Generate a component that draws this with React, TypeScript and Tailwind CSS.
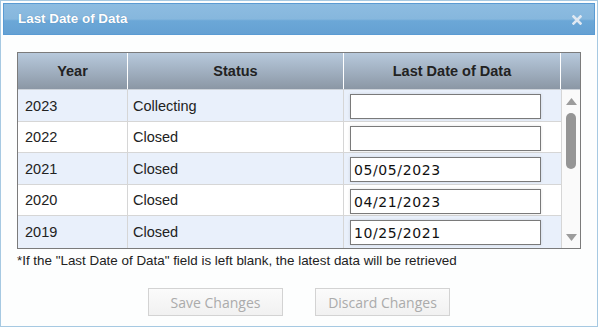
import React from "react";

const rows = [
  { year: "2023", status: "Collecting", date: "", h: "h-[32px]" },
  { year: "2022", status: "Closed", date: "", h: "h-[31px]" },
  { year: "2021", status: "Closed", date: "05/05/2023", h: "h-[32px]" },
  { year: "2020", status: "Closed", date: "04/21/2023", h: "h-[31px]" },
  { year: "2019", status: "Closed", date: "10/25/2021", h: "h-[32px]" },
];

export default function App() {
  return (
    <div className="w-[598px] h-[327px] border border-[#a6c9e2] bg-[#fdfefe] p-[2px] font-['Liberation_Sans',Arial,sans-serif] text-[#222]">
      {/* Title bar */}
      <div className="h-[32px] flex items-center justify-between border border-[#5a9bd3] bg-[linear-gradient(to_bottom,#8dbce1_0%,#86b7dd_50%,#6ba7d7_56%,#65a1d3_100%)] pl-[14px] pr-[12px]">
        <span className="text-[13.4px] font-bold text-white [text-shadow:0_0_1px_rgba(40,90,140,0.5)]">Last Date of Data</span>
        <svg width="10" height="10" viewBox="0 0 10 10" className="mt-[1px]">
          <path d="M1.5 1.5 L8.5 8.5 M8.5 1.5 L1.5 8.5" stroke="#dfe8f2" strokeWidth="2.6" strokeLinecap="square" />
        </svg>
      </div>

      {/* Table */}
      <div className="ml-[14px] mt-[17px] w-[564px] border border-[#7b7b7b]">
        <div className="grid grid-cols-[110px_216px_217px_19px] h-[37px] bg-[linear-gradient(to_bottom,#b7c9dc,#8b97a5)] border-b border-[#cdd3da] text-[14.5px] font-bold text-[#222]">
          <div className="flex items-center justify-center pt-[1px] border-r border-white">Year</div>
          <div className="flex items-center justify-center pt-[1px] border-r border-white">Status</div>
          <div className="flex items-center justify-center pt-[1px] border-r border-white">Last Date of Data</div>
          <div />
        </div>
        <div className="flex">
          <div className="w-[543px]">
            {rows.map((r, i) => (
              <div
                key={r.year}
                className={`grid grid-cols-[110px_216px_217px] ${r.h} text-[14.5px] ${i % 2 === 0 ? "bg-[#e9f0fb]" : "bg-white"} ${i < rows.length - 1 ? "border-b border-[#d6d6d6]" : ""}`}
              >
                <div className="flex items-center pl-[7px] pt-[2px] border-r border-[#d6d6d6]">{r.year}</div>
                <div className="flex items-center pl-[5px] pt-[2px] border-r border-[#d6d6d6]">{r.status}</div>
                <div className="pl-[6px] pt-[4px]">
                  <input
                    readOnly
                    value={r.date}
                    className="w-[191px] h-[25px] border border-[#7a7a7a] bg-white px-[3px] text-[14px] tracking-[0.6px] text-[#111] font-['DejaVu_Sans',Verdana,sans-serif] outline-none shadow-[0_0_3px_rgba(0,0,0,0.12)]"
                  />
                </div>
              </div>
            ))}
          </div>
          <div className="w-[19px] border-l border-[#d6d6d6] bg-[#fafafa] flex flex-col items-center pt-[8px] pb-[7px]">
            <svg width="11" height="7" viewBox="0 0 11 7">
              <path d="M5.5 0 L11 7 L0 7 Z" fill="#9c9c9c" />
            </svg>
            <div className="mt-[8px] w-[10px] h-[56px] rounded-[5px] bg-[#959595]" />
            <div className="flex-1" />
            <svg width="11" height="7" viewBox="0 0 11 7">
              <path d="M0 0 L11 0 L5.5 7 Z" fill="#9c9c9c" />
            </svg>
          </div>
        </div>
      </div>

      <p className="ml-[14px] mt-[4px] text-[13.4px] leading-[15px] text-[#222]">
        *If the "Last Date of Data" field is left blank, the latest data will be retrieved
      </p>

      <div className="mt-[20px] flex justify-center gap-[32px]">
        <button className="w-[135px] h-[28px] border border-[#d3d3d3] bg-[linear-gradient(to_bottom,#fbfbfb,#f1f1f1)] text-[14px] text-[#ababab] font-['Open_Sans',sans-serif]">
          Save Changes
        </button>
        <button className="w-[135px] h-[28px] border border-[#d3d3d3] bg-[linear-gradient(to_bottom,#fbfbfb,#f1f1f1)] text-[14px] text-[#ababab] font-['Open_Sans',sans-serif]">
          Discard Changes
        </button>
      </div>
    </div>
  );
}
